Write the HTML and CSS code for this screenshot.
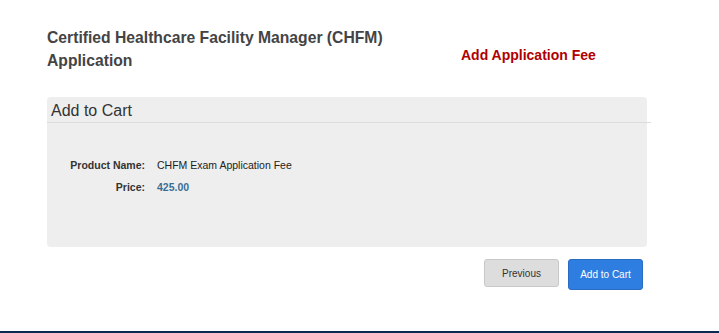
FILE: index.html
```html
<!DOCTYPE html>
<html lang="en">
<head>
  <meta charset="UTF-8" />
  <title>Add to Cart</title>
  <link rel="stylesheet" href="styles.css">
</head>
<body>
  <div class="page">
    <div class="page-header">
      <h2 class="app-title">Certified Healthcare Facility Manager (CHFM) Application</h2>
      <h3 class="step-title">Add Application Fee</h3>
    </div>

    <div class="cart-panel">
      <h3 class="panel-title">Add to Cart</h3>
      <div class="product-info">
        <div class="info-row">
          <span class="info-label">Product Name:</span>
          <span class="info-value">CHFM Exam Application Fee</span>
        </div>
        <div class="info-row">
          <span class="info-label">Price:</span>
          <span class="info-value price">425.00</span>
        </div>
      </div>
    </div>

    <div class="actions">
      <button class="btn btn-prev">Previous</button>
      <button class="btn btn-add">Add to Cart</button>
    </div>
  </div>
  <div class="footer-bar"></div>
</body>
</html>
```

FILE: styles.css
```css
body {
  margin: 0;
  font-family: 'Liberation Sans', Arial, sans-serif;
  color: #333;
  background: #fff;
  height: 333px;
  display: flex;
  flex-direction: column;
}

*, *::before, *::after {
  box-sizing: border-box;
}

.page {
  width: 600px;
  margin-left: 47px;
  flex: 1;
}

.page-header {
  display: flex;
  align-items: flex-start;
  padding-top: 26px;
}

.app-title {
  margin: 0;
  width: 360px;
  font-size: 15.7px;
  line-height: 23px;
  font-weight: bold;
  color: #444;
}

.step-title {
  margin: 18px 0 0 54px;
  font-size: 14px;
  line-height: 23px;
  font-weight: bold;
  color: #b00000;
}

.cart-panel {
  margin-top: 25px;
  height: 150px;
  background-color: #eeeeee;
  border-radius: 4px;
}

.panel-title {
  margin: 0;
  padding: 3px 4px 0;
  height: 26px;
  width: calc(100% + 4px);
  font-size: 16px;
  line-height: 22px;
  font-weight: normal;
  color: #333;
  border-bottom: 1px solid #dcdcdc;
}

.product-info {
  padding-top: 34px;
  display: flex;
  flex-direction: column;
  gap: 6px;
}

.info-row {
  display: flex;
  gap: 12px;
  font-size: 10.5px;
  line-height: 16px;
}

.info-label {
  width: 98px;
  text-align: right;
  font-weight: bold;
  color: #333;
}

.info-value {
  color: #222;
}

.price {
  font-weight: bold;
  color: #3a6f95;
}

.actions {
  display: flex;
  justify-content: flex-end;
  align-items: flex-start;
  gap: 9px;
  margin-top: 12px;
  padding-right: 4px;
}

.btn {
  width: 75px;
  font-family: 'Liberation Sans', Arial, sans-serif;
  font-size: 10px;
  border-radius: 3px;
  cursor: pointer;
}

.btn-prev {
  height: 28px;
  background-color: #dddddd;
  border: 1px solid #c8c8c8;
  color: #333;
}

.btn-add {
  height: 31px;
  background-color: #2e7de0;
  border: 1px solid #2a6cc0;
  color: #fff;
}

.footer-bar {
  height: 2px;
  background-color: #0b2a52;
}
```
